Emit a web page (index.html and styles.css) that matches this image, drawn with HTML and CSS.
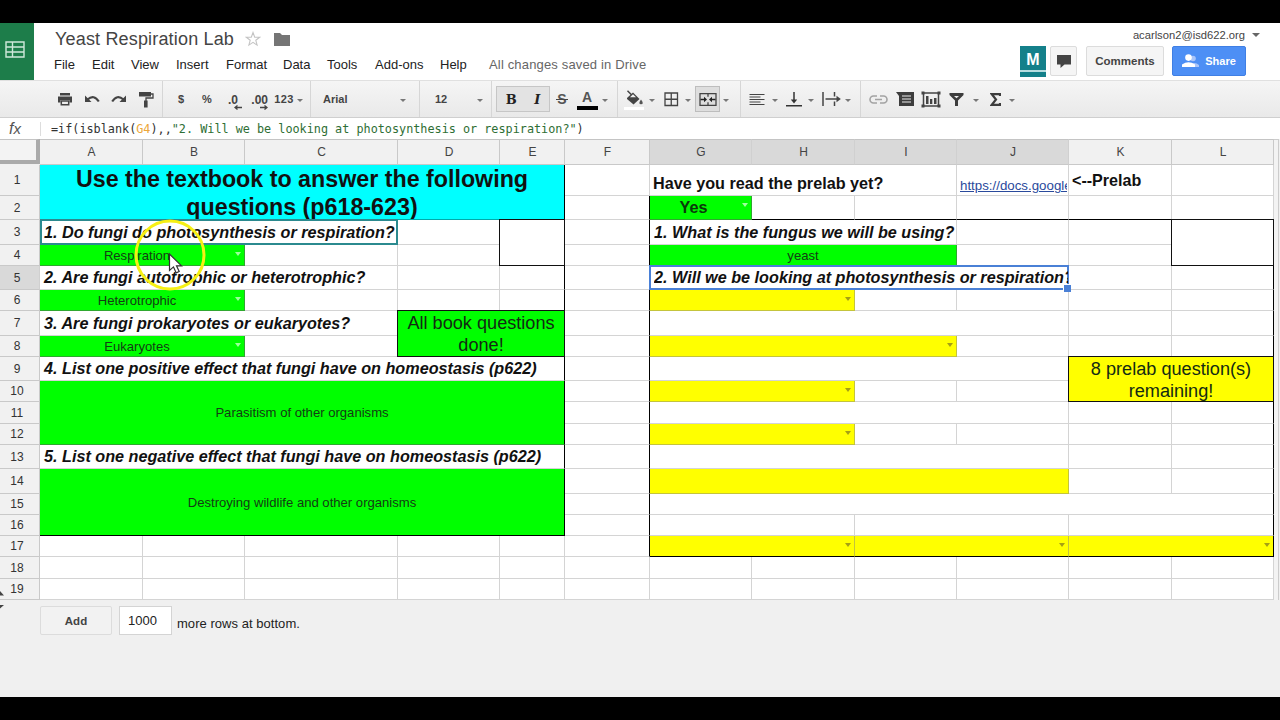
FILE: index.html
```html
<!DOCTYPE html>
<html lang="en">
<head>
<meta charset="utf-8">
<title>Yeast Respiration Lab</title>
<link rel="stylesheet" href="styles.css">
</head>
<body>
<div class="app">
  <header class="top">
    <div class="logo">
      <svg width="20" height="17" viewBox="0 0 20 17" fill="none" stroke="#cfe8da" stroke-width="1.4"><path d="M1 1h18v15H1zM1 6h18M1 11h18M7.5 1v15"/></svg>
    </div>
    <div class="doc">
      <div class="title-row">
        <span class="doc-title">Yeast Respiration Lab</span>
        <svg class="star" width="16" height="16" viewBox="0 0 16 16" fill="none" stroke="#c4c4c4" stroke-width="1.1"><path d="M8 1.5l1.7 4.6 4.9.2-3.8 3 1.3 4.8L8 11.4l-4.1 2.7 1.3-4.8-3.8-3 4.9-.2z"/></svg>
        <svg width="18" height="15" viewBox="0 0 18 15" fill="#757575"><path d="M1 1h6l2 2h8v11H1z"/></svg>
      </div>
      <nav class="menu">
        <span class="m-file">File</span><span class="m-edit">Edit</span><span class="m-view">View</span><span class="m-insert">Insert</span><span class="m-format">Format</span><span class="m-data">Data</span><span class="m-tools">Tools</span><span class="m-addons">Add-ons</span><span class="m-help">Help</span><span class="saved">All changes saved in Drive</span>
      </nav>
    </div>
    <div class="account">
      <div class="email"><span>acarlson2@isd622.org</span><i class="caret"></i></div>
      <div class="actions">
        <div class="avatar">M</div>
        <div class="btn chat"><svg width="14" height="14" viewBox="0 0 14 14" fill="#444"><path d="M0 1h14v9.500H7.500L3.500 14v-3.500H0z"/></svg></div>
        <div class="btn comments">Comments</div>
        <div class="btn share"><svg width="17" height="14" viewBox="0 0 17 14"><g fill="#a9c5fa"><circle cx="11" cy="4.500" r="2.800"/><path d="M9 13V10q4-2.500 8 1v2z"/></g><g fill="#fff"><circle cx="6.500" cy="3.600" r="3.300"/><path d="M0 13v-2.500q6.500-4.500 13 0V13z"/></g></svg><span>Share</span></div>
      </div>
    </div>
  </header>

  <div class="toolbar">
    <div class="group g1">
      <span class="c27"><svg width="16" height="14" viewBox="0 0 16 14"><path d="M3 1h10v2.500H3zM1 4.500h14v6h-2.500V8h-9v2.500H1z" fill="#444"/><path d="M4.300 9h7.400v3.800H4.300z" fill="none" stroke="#444" stroke-width="1.500"/></svg></span>
      <span class="c27"><svg width="16" height="10" viewBox="0 0 16 10"><path d="M1 1.500v6.500h6.500z" fill="#444"/><path d="M3.500 5.500Q10 0 14.800 7.500" fill="none" stroke="#444" stroke-width="2.200"/></svg></span>
      <span class="c27"><svg width="16" height="10" viewBox="0 0 16 10"><path d="M15 1.500v6.500H8.500z" fill="#444"/><path d="M12.500 5.500Q6 0 1.200 7.500" fill="none" stroke="#444" stroke-width="2.200"/></svg></span>
      <span class="c27"><svg width="16" height="17" viewBox="0 0 16 17"><path d="M1 1h12v4.500H1z" fill="#444"/><path d="M12 3h3v4H8v3" fill="none" stroke="#444" stroke-width="1.300"/><path d="M6 9.500h3.600V16.500H6z" fill="#444"/></svg></span>
    </div>
    <div class="group g2">
      <span class="c26 glyph">$</span>
      <span class="c26 glyph">%</span>
      <span class="c26 dec"><b>.0</b><svg width="8" height="5" viewBox="0 0 8 5"><path d="M8 2.500H2M3.500.5L1 2.500l2.500 2" fill="none" stroke="#444" stroke-width="1.300"/></svg></span>
      <span class="c26 dec"><b>.00</b><svg width="8" height="5" viewBox="0 0 8 5"><path d="M0 2.500h6M4.500.5L7 2.500l-2.500 2" fill="none" stroke="#444" stroke-width="1.300"/></svg></span>
      <span class="n123 glyph">123</span><span class="dd"></span>
    </div>
    <div class="group g3"><span class="glyph">Arial</span><span class="dd"></span></div>
    <div class="group g4"><span class="glyph">12</span><span class="dd"></span></div>
    <div class="group g5">
      <div class="pressed"><span class="bold">B</span><span class="ital">I</span></div>
      <span class="c24 strike">S</span>
      <span class="c26 tcolor">A</span><span class="dd"></span>
    </div>
    <div class="group g6">
      <span class="c26 up"><svg width="20" height="20" viewBox="0 0 20 20"><path d="M3 8l6-5.500L15.500 9 9.500 14.500 3 9z" fill="#444"/><path d="M3.500.8L10 7.300" stroke="#444" stroke-width="1.500"/><path d="M6 7.300l3-3 3 3z" fill="#eee"/><path d="M17 9.500q3.500 4.500 0 4.700-3.300-.2 0-4.700z" fill="#555"/><path d="M0 17h20v3H0z" fill="#fff"/></svg></span><span class="dd"></span>
      <span class="c26 gap1"><svg width="15" height="15" viewBox="0 0 15 15"><path d="M1 1h12.500v12.500H1zM7.250 1v12.500M1 7.250h12.500" fill="none" stroke="#444" stroke-width="1.300"/></svg></span><span class="dd dd8"></span>
      <span class="merge"><svg width="18" height="13" viewBox="0 0 18 13"><path d="M1 .7h16v11.600H1zM9 .7v3M9 9.300v3" fill="none" stroke="#444" stroke-width="1.300"/><path d="M1.500 6.500h4M16.500 6.500h-4" stroke="#222" stroke-width="1.400"/><path d="M5 3.800l3 2.700-3 2.700zM13 3.800l-3 2.700 3 2.700z" fill="#222"/></svg></span><span class="dd gap1"></span>
    </div>
    <div class="group g7">
      <span class="c26"><svg width="16" height="13" viewBox="0 0 16 13"><path d="M.5 1.500h15M.5 4h11M.5 6.500h15M.5 9h11M.5 11.500h15" stroke="#444" stroke-width="1.200"/></svg></span><span class="dd"></span>
      <span class="c26 gap1"><svg width="16" height="15" viewBox="0 0 16 15"><path d="M8 0v8M0 13.700h16" stroke="#333" stroke-width="1.500"/><path d="M4.800 7.500h6.400L8 11.500z" fill="#333"/></svg></span><span class="dd dd8"></span>
      <span class="c26 gap3"><svg width="19" height="14" viewBox="0 0 19 14"><path d="M1 0v14M12.500 0v4.500M12.500 9.500V14M3.500 7H15" stroke="#444" stroke-width="1.500"/><path d="M14.500 3.800L18.800 7l-4.300 3.200z" fill="#444"/></svg></span><span class="dd dd8"></span>
    </div>
    <div class="group g8">
      <span class="c26"><svg width="19" height="9" viewBox="0 0 19 9" fill="none" stroke="#a3a3a3" stroke-width="1.600"><path d="M8 1H4.500a3.500 3.500 0 000 7H8M11 1h3.500a3.500 3.500 0 010 7H11M6 4.500h7"/></svg></span>
      <span class="c26 gap1"><svg width="19" height="16" viewBox="0 0 19 16"><path d="M0 1h18v14H3V5z" fill="#3d3d3d"/><path d="M6 5h9M6 8h9M6 11h9" stroke="#eee" stroke-width="1.200"/></svg></span>
      <span class="c26"><svg width="20" height="17" viewBox="0 0 20 17"><path d="M2.500 2h15v13h-15z" fill="none" stroke="#444" stroke-width="1.500"/><path d="M.5.500h3v3h-3zM16.500.500h3v3h-3zM.5 13.500h3v3h-3zM16.500 13.500h3v3h-3zM5 5h2.500v8H5zM9 8h2.300v5H9zM13 7h2.500v6H13z" fill="#444"/></svg></span>
      <span class="c24"><svg width="15" height="13" viewBox="0 0 15 13"><path d="M.5 0h14v2L9 7.500V13H6V7.500L.5 2z" fill="#3d3d3d"/><path d="M5 3h5L7.500 5.300z" fill="#eee"/></svg></span><span class="dd gap3"></span>
      <span class="sigma"><svg width="11" height="13" viewBox="0 0 11 13"><path d="M10 3V1.200H1.800L6 6.500l-4.200 5.300H10V10" fill="none" stroke="#3d3d3d" stroke-width="2.200"/></svg></span><span class="dd gap1"></span>
    </div>
  </div>

  <div class="formula"><span class="fx">f<small>x</small></span><span class="code">=if(isblank(<em>G4</em>),,<q>"2. Will we be looking at photosynthesis or respiration?"</q>)</span></div>

  <main class="sheet-wrap">
    <div class="sheet" id="sheet"></div>
    <div class="edge"></div>
    <svg class="pointer" width="72" height="72" viewBox="0 0 72 72"><circle cx="36" cy="36" r="34" fill="none" stroke="#f6f014" stroke-width="3"/><path d="M35.500 35v16.500l4-3.600 2.700 6 3-1.400-2.700-5.700h5z" fill="#fff" stroke="#333" stroke-width="1.200"/></svg>
  </main>

  <footer class="more">
    <div class="add">Add</div>
    <div class="count">1000</div>
    <span>more rows at bottom.</span>
    <svg class="splitter" width="4" height="20" viewBox="0 0 4 20" fill="#444"><path d="M0 0l4 4.500H0zM0 14h4L0 17.500z"/></svg>
  </footer>
</div>
<script src="sheet.js"></script>
</body>
</html>
```

FILE: sheet.js
```js
const ROWS = 19;
const COLS = "ABCDEFGHIJKL";

// range: [classes, text]
const cells = {
  "A1:E2": ["cyan title endblack", "Use the textbook to answer the following questions (p618-623)"],
  "A3:C3": ["q ref", "1. Do fungi do photosynthesis or respiration?"],
  "E3:E4": ["boxed", ""],
  "A4:B4": ["green ans pick", "Respiration"],
  "A5:C5": ["q", "2. Are fungi autotrophic or heterotrophic?"],
  "A6:B6": ["green ans pick", "Heterotrophic"],
  "A7:C7": ["q", "3. Are fungi prokaryotes or eukaryotes?"],
  "D7:E8": ["green status boxed", "All book questions done!"],
  "A8:B8": ["green ans pick", "Eukaryotes"],
  "A9:E9": ["q endblack", "4. List one positive effect that fungi have on homeostasis (p622)"],
  "A10:E12": ["green ans endblack", "Parasitism of other organisms"],
  "A13:E13": ["q endblack", "5. List one negative effect that fungi have on homeostasis (p622)"],
  "A14:E16": ["green ans endblack footblack", "Destroying wildlife and other organisms"],
  "E5:E5": ["endblack", ""],
  "E6:E6": ["endblack", ""],
  "G1:I1": ["ask", "Have you read the prelab yet?"],
  "J1:J1": ["link", "https://docs.google"],
  "K1:K1": ["note", "<--Prelab"],
  "G2:G2": ["green yes pick", "Yes"],
  "G3:I3": ["q", "1. What is the fungus we will be using?"],
  "L3:L4": ["boxed", ""],
  "G4:I4": ["green ans", "yeast"],
  "G5:J5": ["q selected", "2. Will we be looking at photosynthesis or respiration?"],
  "G6:H6": ["yellow pick", ""],
  "G7:J7": ["", ""],
  "G8:I8": ["yellow pick", ""],
  "G9:J9": ["", ""],
  "K9:L10": ["yellow status boxed", "8 prelab question(s) remaining!"],
  "G10:H10": ["yellow pick", ""],
  "G11:J11": ["", ""],
  "G12:H12": ["yellow pick", ""],
  "G13:J13": ["", ""],
  "G14:J14": ["yellow", ""],
  "G15:L15": ["endblack", ""],
  "G16:H16": ["", ""],
  "I16:J16": ["", ""],
  "K16:L16": ["endblack", ""],
  "G17:H17": ["yellow pick footblack", ""],
  "I17:J17": ["yellow pick footblack", ""],
  "K17:L17": ["yellow pick footblack endblack", ""]
};

const sheet = document.getElementById("sheet");

function add(cls, text, r1, c1, r2, c2) {
  const el = document.createElement("div");
  el.className = cls;
  el.style.gridArea = [r1, c1, r2 + 1, c2 + 1].join(" / ");
  if (text) {
    const span = document.createElement("span");
    span.textContent = text;
    el.append(span);
  }
  sheet.append(el);
}

add("corner", "", 1, 1, 1, 1);
for (let c = 0; c < COLS.length; c++) {
  add("colhead" + ("GHIJ".includes(COLS[c]) ? " active" : ""), COLS[c], 1, c + 2, 1, c + 2);
}
for (let r = 1; r <= ROWS; r++) {
  add("rowhead" + (r === 5 ? " active" : ""), String(r), r + 1, 1, r + 1, 1);
}

const taken = new Set();
for (const [range, [cls, text]] of Object.entries(cells)) {
  const [, a, r1, b, r2] = range.match(/([A-L])(\d+):([A-L])(\d+)/);
  const c1 = COLS.indexOf(a), c2 = COLS.indexOf(b);
  for (let r = +r1; r <= +r2; r++) {
    for (let c = c1; c <= c2; c++) taken.add(r + "," + c);
  }
  add("cell " + cls, text, +r1 + 1, c1 + 2, +r2 + 1, c2 + 2);
}
for (let r = 1; r <= ROWS; r++) {
  for (let c = 0; c < COLS.length; c++) {
    if (taken.has(r + "," + c)) continue;
    let cls = "cell";
    if (COLS[c] === "F" && r >= 2 && r <= 17) cls += " endblack";
    if (COLS[c] === "L" && r >= 3 && r <= 17) cls += " endblack";
    if (r === 2 && c >= 6) cls += " footblack";
    add(cls, "", r + 1, c + 2, r + 1, c + 2);
  }
}
```

FILE: styles.css
```css
* { box-sizing: border-box; }
body { margin: 0; background: #000; font-family: "Liberation Sans", Arial, sans-serif; color: #222; }
.app { margin: 23px 0; height: 674px; background: #f0f0f0; overflow: hidden; display: flex; flex-direction: column; }

.top { height: 57px; flex: none; background: #fff; display: flex; }
.logo { width: 34px; height: 57px; background: #1d7d4a; padding: 18px 0 0 5px; }
.logo svg { display: block; }
.doc { flex: 1; padding-left: 20px; }
.title-row { display: flex; align-items: center; height: 32px; padding-left: 1px; }
.doc-title { font-size: 18px; color: #444; width: 190px; white-space: nowrap; letter-spacing: .17px; }
.star { margin-right: 12px; }
.menu { display: flex; height: 20px; line-height: 20px; font-size: 13px; color: #222; white-space: nowrap; }
.m-file { width: 38px; } .m-edit { width: 39px; } .m-view { width: 45px; } .m-insert { width: 50px; }
.m-format { width: 57px; } .m-data { width: 44px; } .m-tools { width: 48px; } .m-addons { width: 65px; } .m-help { width: 49px; }
.saved { color: #666; letter-spacing: .16px; }
.account { width: 260px; display: flex; flex-direction: column; }
.email { display: flex; justify-content: flex-end; align-items: center; height: 23px; padding-right: 20px; font-size: 11.200px; color: #444; gap: 7px; }
.caret { border: 4px solid transparent; border-top-color: #666; border-bottom: 0; }
.actions { display: flex; height: 30px; }
.avatar { width: 26px; height: 31px; background: linear-gradient(#14808a 24px, #b7dde0 24px, #b7dde0 26px, #14808a 26px); color: #fff; font-size: 16px; font-weight: bold; line-height: 27px; text-align: center; }
.btn { border: 1px solid #dcdcdc; border-radius: 2px; background: #f5f5f5; display: flex; align-items: center; justify-content: center; font-size: 11.500px; font-weight: bold; color: #444; height: 30px; }
.chat { width: 27px; margin-left: 4px; }
.comments { width: 78px; margin-left: 9px; }
.share { width: 74px; margin-left: 8px; background: #4d8ff5; border-color: #3f7fe4; color: #fff; gap: 6px; font-size: 11px; }

.toolbar { height: 38px; flex: none; border-top: 1px solid #e0e0e0; border-bottom: 1px solid #cfcfcf; background: linear-gradient(#f5f5f5, #e9e9e9); display: flex; }
.group { display: flex; align-items: center; border-right: 1px solid #d6d6d6; }
.group > span { display: flex; align-items: center; justify-content: center; flex: none; }
.glyph { font-size: 11px; font-weight: bold; color: #444; }
.g1 { width: 163px; padding-left: 51px; }
.g2 { width: 148px; padding-left: 5px; }
.g3 { width: 109px; padding-left: 12px; }
.g3 .glyph { width: 75px; justify-content: flex-start; }
.g4 { width: 72px; padding-left: 15px; }
.g4 .glyph { width: 40px; justify-content: flex-start; }
.g5 { width: 126px; padding-left: 4px; }
.g6 { width: 123px; padding-left: 3px; }
.g7 { width: 120px; padding-left: 3px; }
.g8 { padding-left: 4px; border: 0; }
.c27 { width: 27px; } .c26 { width: 26px; } .c24 { width: 24px; }
.gap1 { margin-left: 1px; } .gap3 { margin-left: 3px; }
.n123 { width: 22px; letter-spacing: .3px; margin-left: 1px; }
.dd { width: 10px; }
.dd8 { width: 8px; }
.dd::before { content: ""; border: 3px solid transparent; border-top-color: #777; border-bottom: 0; margin-top: 2px; }
.group > .dec { flex-direction: column; align-items: flex-end; padding: 6px 4px 0 0; font-size: 12px; line-height: 12px; color: #444; }
.dec b { padding-right: 4px; }
.dec:nth-child(4) b { padding-right: 0; }
.dec svg { margin-top: -1px; }
.pressed { width: 54px; height: 26px; border: 1px solid #c6c6c6; background: #e3e3e3; display: flex; align-items: center; justify-content: space-around; color: #222; font: bold 13px "DejaVu Serif", serif; }
.ital { font-style: italic; }
.strike { position: relative; font: bold 14px "Liberation Sans", sans-serif; color: #555; }
.strike::after { content: ""; position: absolute; left: 6px; right: 6px; top: 8px; height: 1px; background: #444; }
.tcolor { height: 24px; font-size: 14px; font-weight: bold; color: #555; padding-bottom: 5px; background: linear-gradient(#000, #000) center bottom 1px / 21px 4px no-repeat; }
.up { padding-top: 1px; }
.group > .merge { width: 25px; height: 26px; margin-left: 3px; border: 1px solid #bdbdbd; background: #dedede; }
.sigma { width: 22px; margin-left: 3px; }

.formula { height: 21px; flex: none; background: #fff; display: flex; align-items: center; }
.fx { width: 41px; height: 14px; line-height: 13px; border-right: 1px solid #ddd; padding-left: 9px; font-style: italic; font-size: 16px; color: #555; }
.fx small { font-size: 15px; }
.code { margin-left: 10px; font-family: "DejaVu Sans Mono", monospace; font-size: 11.800px; white-space: pre; color: #333; }
.code em { font-style: normal; color: #eda73a; }
.code q { quotes: none; color: #2e6e34; }

.sheet-wrap { flex: none; display: flex; position: relative; }
.sheet {
  display: grid; flex: none;
  grid-template-columns: 40px 103px 102px 153px 102px 65px 85px 102px 103px 102px 112px 103px 102px;
  grid-template-rows: 26px 31px 24px 25px 21px 24px 21px 25px 21px 24px 21px 22px 21px 24px 25px 21px 21px 21px 22px 21px;
}
.edge { flex: 1; border: 1px solid #ccc; border-width: 1px 1px 0 0; margin-right: 1px; background: #f3f3f3; }
.corner { background: #f3f3f3; border: 1px solid #c4c4c4; border-width: 1px 4px 4px 0; border-right-color: #aaa; border-bottom-color: #aaa; margin-bottom: 1px; }
.colhead, .rowhead { background: #f1f1f1; border-right: 1px solid #c9c9c9; border-bottom: 1px solid #c9c9c9; display: flex; align-items: center; justify-content: center; font-size: 12px; color: #444; }
.colhead { border-top: 1px solid #c4c4c4; padding-left: 1px; }
.rowhead { padding-right: 5px; color: #333; }
.active { background: #d9d9d9; border-right-color: #d0d0d0; }
.cell { background: #fff; border-right: 1px solid #d4d4d4; border-bottom: 1px solid #d4d4d4; display: flex; align-items: center; min-width: 0; min-height: 0; overflow: hidden; white-space: nowrap; color: #111; position: relative; }
.green { background: #0f0; border-color: #2fa82f; }
.yellow { background: #ff0; border-color: #c4c43c; }
.cyan { background: #0ff; border-color: #0aa; }
.endblack { border-right-color: #000; }
.footblack { border-bottom-color: #000; }
.boxed { margin: -1px 0 0 -1px; border: 1px solid #111; z-index: 2; }
.title { font-size: 23.250px; font-weight: bold; line-height: 28px; justify-content: center; text-align: center; white-space: normal; padding: 1px 24px 0; }
.q { font-size: 16.200px; font-weight: bold; font-style: italic; padding-left: 4px; }
.ref { border: 2px solid #2b8a8f; margin: -1px 0 0; padding-left: 2px; z-index: 2; }
.selected { border: 2px solid #4a80d6; margin: -1px 0 0 -1px; padding-left: 3px; z-index: 3; overflow: visible; }
.selected span { overflow: hidden; width: 414px; flex: none; }
.selected::after { content: ""; position: absolute; right: -4px; bottom: -4px; width: 7px; height: 7px; background: #4a80d6; border: 1px solid #fff; border-width: 1px 0 0 1px; }
.ans { font-size: 13.100px; justify-content: center; color: #143c14; }
.pick.ans { padding-right: 10px; }
.pick::after { content: ""; position: absolute; right: 3px; top: 7px; border: 3px solid transparent; border-top: 4px solid #a5a014; border-bottom: 0; }
.green.pick::after { border-top-color: #9dff9d; }
.status { font-size: 18.150px; line-height: 22px; white-space: normal; text-align: center; justify-content: center; padding: 1px 5px 0; color: #132b13; }
.ask { font-size: 16.200px; font-weight: bold; padding: 7px 0 0 3px; }
.note { font-size: 16.100px; font-weight: bold; padding: 1px 0 0 3px; }
.link { font-size: 13.300px; color: #2a4a9c; text-decoration: underline; padding: 11px 0 0 3px; }
.link span { overflow: hidden; width: 107px; flex: none; }
.yes { font-size: 16.200px; font-weight: bold; justify-content: center; padding-right: 14px; color: #0a3a0a; }

.pointer { position: absolute; left: 134px; top: 80px; z-index: 5; }

.more { display: flex; position: relative; padding: 6px 0 0 40px; font-size: 13px; color: #222; }
.add { width: 72px; height: 29px; border: 1px solid #dcdcdc; background: #f2f2f2; border-radius: 2px; font-size: 11.500px; font-weight: bold; color: #444; display: flex; align-items: center; justify-content: center; }
.count { width: 53px; height: 29px; margin: 0 5px 0 7px; border: 1px solid #d4d4d4; background: #fff; padding-left: 8px; line-height: 28px; font-size: 13px; }
.more span { line-height: 35px; letter-spacing: .04px; }
.splitter { position: absolute; left: 0; top: -9px; }
```
